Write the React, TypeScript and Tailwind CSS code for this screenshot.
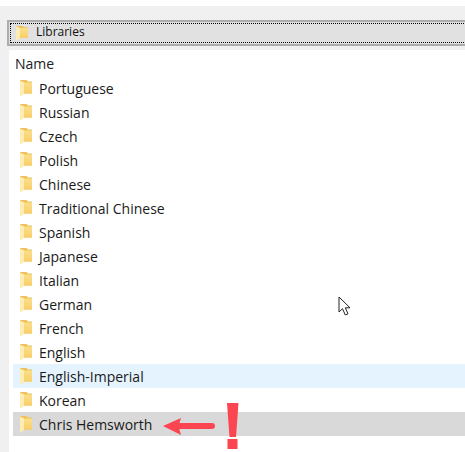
const names = ["Portuguese","Russian","Czech","Polish","Chinese","Traditional Chinese","Spanish","Japanese","Italian","German","French","English","English-Imperial","Korean","Chris Hemsworth"];

function Folder({ className = "", h = 18 }: { className?: string; h?: number }) {
  return (
    <svg width="14" height={h} viewBox="0 0 14 18" preserveAspectRatio="none" className={"shrink-0 " + className}>
      <defs>
        <linearGradient id="fg" x1="0" y1="0" x2="0" y2="1">
          <stop offset="0" stopColor="#fbdf8a" />
          <stop offset="1" stopColor="#f7cf68" />
        </linearGradient>
      </defs>
      <path d="M1 1H7.5L9 2.5H13V14.5H1Z" fill="#eec25a" />
      <path d="M5 3.5H13V14.5H5Z" fill="url(#fg)" />
      <path d="M1 1.5L5 3.5V15L1 18Z" fill="#fdedb2" />
    </svg>
  );
}

export default function App() {
  return (
    <div className="w-[465px] h-[452px] overflow-hidden bg-white pt-[6px] font-['Open_Sans','Noto_Sans',sans-serif] text-[14px] text-[#1a1a1a] relative">
      <div className="h-[446px] bg-[#f0f0f0] pt-[14px] flex flex-col">
        <div className="ml-[7px] h-[26px] shrink-0 border-2 border-r-0 border-[#adadad] bg-[#e1e1e1] p-px">
          <div className="h-full border border-dotted border-r-0 border-black flex items-center pl-[4px] gap-[7px]">
            <Folder h={16} />
            <span className="text-[12px] text-[#111] pb-[2px]">Libraries</span>
          </div>
        </div>
        <div className="mt-[4px] ml-[9px] flex-1 bg-white pt-[2px]">
          <div className="h-[24px] flex items-center pl-[6px] pb-[2px] text-[#222]">Name</div>
          <div className="flex flex-col pl-[4px]">
            {names.map((n) => (
              <div
                key={n}
                className={
                  "h-[24px] flex items-center pl-[6px] gap-[6px] " +
                  (n === "English-Imperial" ? "bg-[#e5f3ff]" : n === "Chris Hemsworth" ? "bg-[#d9d9d9]" : "")
                }
              >
                <Folder />
                <span>{n}</span>
              </div>
            ))}
          </div>
        </div>
      </div>

      <svg className="absolute left-[338px] top-[296px]" width="14" height="21" viewBox="0 0 14 21">
        <path d="M1 1V16L4.5 12.7L7.3 19L10 17.8L7.3 11.8H12Z" fill="#fff" stroke="#222" strokeWidth="1" />
      </svg>

      <svg className="absolute left-[160px] top-[400px]" width="90" height="52" viewBox="0 0 90 52">
        <path d="M18 26H52" stroke="#fb4550" strokeWidth="6" strokeLinecap="round" />
        <path d="M3 26L21 18L18.5 26L21 35Z" fill="#fb4550" />
        <path d="M67 3H78.5L76 37H69.5Z" fill="#fb4550" />
        <rect x="67.5" y="39" width="10" height="10" fill="#fb4550" />
      </svg>
    </div>
  );
}
